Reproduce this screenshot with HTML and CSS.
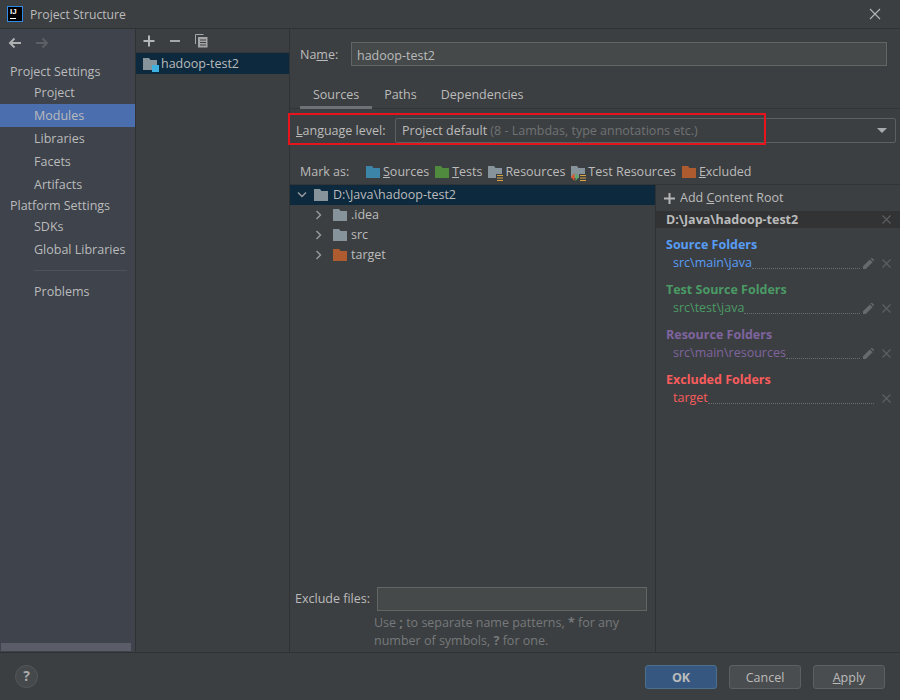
FILE: index.html
```html
<!DOCTYPE html>
<html lang="en">
<head>
    <meta charset="UTF-8">
    <title>Project Structure</title>
    <link rel="stylesheet" href="styles.css">
</head>
<body>
    <svg class="defs" width="0" height="0">
        <symbol id="folder" viewBox="0 0 14 12"><path d="M0 0h6l1.500 2H14v10H0z" fill="currentColor"/></symbol>
        <symbol id="lines" viewBox="0 0 6 6"><path d="M0 0h6v1H0zM0 2.500h6v1H0zM0 5h6v1H0z" fill="#d9a343"/></symbol>
        <symbol id="close" viewBox="0 0 9 9"><path d="M.5.500l8 8M8.500.500l-8 8" stroke="#5d6063" stroke-width="1.100" fill="none"/></symbol>
        <symbol id="pencil" viewBox="0 0 11 11"><path d="M0 11V8.200L6.800 1.400l2.800 2.800L2.800 11zM7.600.600L8.200 0q.5-.3 1 0l1.700 1.700q.3.500 0 1l-.6.600z" fill="#676a6c"/></symbol>
        <symbol id="chevron" viewBox="0 0 8 10"><path d="M1.500 1l4 4-4 4" stroke="#9a9da0" stroke-width="1.400" fill="none"/></symbol>
    </svg>

    <div class="window">
        <div class="titlebar">
            <div class="logo"><span class="logo-text">IJ</span><span class="logo-bar"></span></div>
            <span class="title">Project Structure</span>
            <svg class="title-close" width="12" height="12" viewBox="0 0 12 12"><path d="M1 1l10 10M11 1L1 11" stroke="#b4b6b8" stroke-width="1.100" fill="none"/></svg>
        </div>

        <div class="main">
            <div class="sidebar">
                <div class="nav-arrows">
                    <svg width="14" height="12" viewBox="0 0 14 12"><path d="M13 6H2M6.500 1.500L2 6l4.500 4.500" stroke="#aeb0b2" stroke-width="2" fill="none"/></svg>
                    <svg width="14" height="12" viewBox="0 0 14 12"><path d="M1 6h11M7.500 1.500L12 6l-4.500 4.500" stroke="#5c5f66" stroke-width="2" fill="none"/></svg>
                </div>
                <div class="nav-heading">Project Settings</div>
                <div class="nav-item tight">Project</div>
                <div class="nav-item active">Modules</div>
                <div class="nav-item">Libraries</div>
                <div class="nav-item">Facets</div>
                <div class="nav-item">Artifacts</div>
                <div class="nav-heading">Platform Settings</div>
                <div class="nav-item tight">SDKs</div>
                <div class="nav-item">Global Libraries</div>
                <div class="nav-separator"></div>
                <div class="nav-item">Problems</div>
                <div class="sidebar-scroll"></div>
            </div>

            <div class="modules">
                <div class="modules-toolbar">
                    <svg width="12" height="12" viewBox="0 0 12 12"><path d="M6 .500v11M.5 6h11" stroke="#b4b6b8" stroke-width="2" fill="none"/></svg>
                    <svg width="12" height="12" viewBox="0 0 12 12"><path d="M1 6h10" stroke="#a4a6a8" stroke-width="2" fill="none"/></svg>
                    <svg width="13" height="14" viewBox="0 0 13 14"><path d="M.5 10V.500h8" stroke="#a4a6a8" fill="none"/><path d="M3 3h9.500v10.500H3z" fill="#a4a6a8"/><path d="M5 6h6M5 8.500h6M5 11h6" stroke="#3c3f41" fill="none"/></svg>
                </div>
                <div class="module-row">
                    <span class="module-icon">
                        <svg class="folder-grey" width="14" height="12"><use href="#folder"/></svg>
                        <span class="module-badge"></span>
                    </span>
                    <span>hadoop-test2</span>
                </div>
            </div>

            <div class="content">
                <div class="name-row">
                    <label class="name-label">Na<u>m</u>e:</label>
                    <div class="field name-field">hadoop-test2</div>
                </div>
                <div class="tabs">
                    <div class="tab selected">Sources</div>
                    <div class="tab">Paths</div>
                    <div class="tab">Dependencies</div>
                </div>
                <div class="language-row">
                    <label class="language-label"><u>L</u>anguage level:</label>
                    <div class="combo">
                        <span>Project default <span class="muted">(8 - Lambdas, type annotations etc.)</span></span>
                        <span class="combo-arrow"></span>
                    </div>
                    <div class="highlight"></div>
                </div>
                <div class="mark-row">
                    <span class="mark-label">Mark as:</span>
                    <span class="mark"><svg class="folder-blue" width="14" height="12"><use href="#folder"/></svg><span><u>S</u>ources</span></span>
                    <span class="mark"><svg class="folder-green" width="14" height="12"><use href="#folder"/></svg><span><u>T</u>ests</span></span>
                    <span class="mark">
                        <span class="stack"><svg class="folder-grey" width="14" height="12"><use href="#folder"/></svg><svg class="stack-lines" width="8" height="8" viewBox="-1 -1 8 8"><use href="#lines" width="6" height="6"/></svg></span>
                        <span>Resources</span>
                    </span>
                    <span class="mark">
                        <span class="stack"><svg class="folder-grey" width="14" height="12"><use href="#folder"/></svg><svg class="stack-lines" width="8" height="8" viewBox="-1 -1 8 8"><use href="#lines" width="6" height="6"/></svg><svg class="stack-test" width="8" height="8" viewBox="0 0 8 8"><path d="M3.500 0v8L0 4z" fill="#d9572b"/><path d="M4.500 0v8L8 4z" fill="#59a869"/></svg></span>
                        <span>Test Resources</span>
                    </span>
                    <span class="mark"><svg class="folder-orange" width="14" height="12"><use href="#folder"/></svg><span><u>E</u>xcluded</span></span>
                </div>

                <div class="split">
                    <div class="tree-pane">
                        <div class="tree">
                            <div class="tree-row selected">
                                <svg class="chevron down" width="8" height="10"><use href="#chevron"/></svg>
                                <svg class="folder-grey" width="14" height="12"><use href="#folder"/></svg>
                                <span>D:\Java\hadoop-test2</span>
                            </div>
                            <div class="tree-row child">
                                <svg class="chevron" width="8" height="10"><use href="#chevron"/></svg>
                                <svg class="folder-grey" width="14" height="12"><use href="#folder"/></svg>
                                <span>.idea</span>
                            </div>
                            <div class="tree-row child">
                                <svg class="chevron" width="8" height="10"><use href="#chevron"/></svg>
                                <svg class="folder-grey" width="14" height="12"><use href="#folder"/></svg>
                                <span>src</span>
                            </div>
                            <div class="tree-row child">
                                <svg class="chevron" width="8" height="10"><use href="#chevron"/></svg>
                                <svg class="folder-orange" width="14" height="12"><use href="#folder"/></svg>
                                <span>target</span>
                            </div>
                        </div>
                        <div class="exclude">
                            <div class="exclude-row">
                                <label>Exclude files:</label>
                                <div class="field exclude-field"></div>
                            </div>
                            <div class="hint">Use <b>;</b> to separate name patterns, <b>*</b> for any<br>number of symbols, <b>?</b> for one.</div>
                        </div>
                    </div>

                    <div class="roots">
                        <div class="add-root">
                            <svg width="11" height="11" viewBox="0 0 11 11"><path d="M5.500 0v11M0 5.500h11" stroke="#b4b6b8" stroke-width="2" fill="none"/></svg>
                            <span>Add <u>C</u>ontent Root</span>
                        </div>
                        <div class="root-header">
                            <span>D:\Java\hadoop-test2</span>
                            <svg width="9" height="9"><use href="#close"/></svg>
                        </div>
                        <div class="group blue">
                            <div class="group-title">Source Folders</div>
                            <div class="group-row"><span>src\main\java</span><span class="leader"></span><svg class="edit" width="11" height="11"><use href="#pencil"/></svg><svg width="9" height="9"><use href="#close"/></svg></div>
                        </div>
                        <div class="group green">
                            <div class="group-title">Test Source Folders</div>
                            <div class="group-row"><span>src\test\java</span><span class="leader"></span><svg class="edit" width="11" height="11"><use href="#pencil"/></svg><svg width="9" height="9"><use href="#close"/></svg></div>
                        </div>
                        <div class="group purple">
                            <div class="group-title">Resource Folders</div>
                            <div class="group-row"><span>src\main\resources</span><span class="leader"></span><svg class="edit" width="11" height="11"><use href="#pencil"/></svg><svg width="9" height="9"><use href="#close"/></svg></div>
                        </div>
                        <div class="group red">
                            <div class="group-title">Excluded Folders</div>
                            <div class="group-row"><span>target</span><span class="leader"></span><svg class="remove" width="9" height="9"><use href="#close"/></svg></div>
                        </div>
                    </div>
                </div>
            </div>
        </div>

        <div class="footer">
            <div class="help">?</div>
            <div class="buttons">
                <div class="btn primary">OK</div>
                <div class="btn">Cancel</div>
                <div class="btn"><u>A</u>pply</div>
            </div>
        </div>
    </div>
</body>
</html>
```

FILE: styles.css
```css
* {
    box-sizing: border-box;
}

body {
    margin: 0;
    background-color: #3c3f41;
    color: #bbbbbb;
    font-family: "Open Sans", "Noto Sans", sans-serif;
    font-size: 12.5px;
    line-height: 20px;
}

.defs {
    position: absolute;
}

.window {
    display: flex;
    flex-direction: column;
    width: 900px;
    height: 700px;
}

svg {
    flex: none;
    display: block;
}

/* folder colours */
.folder-grey { color: #87939a; }
.folder-blue { color: #3d85a8; }
.folder-green { color: #4f8a3e; }
.folder-orange { color: #ae5b2f; }

/* title bar */
.titlebar {
    display: flex;
    align-items: center;
    height: 29px;
    padding: 0 19px 0 7px;
    border-bottom: 1px solid #2f3133;
}

.logo {
    position: relative;
    width: 16px;
    height: 16px;
    margin-right: 7px;
    background-color: #000;
    border: 1px solid #2f8ae8;
}

.logo-text {
    position: absolute;
    left: 2px;
    top: 1px;
    color: #fff;
    font-family: "Liberation Sans", sans-serif;
    font-size: 8px;
    font-weight: bold;
    line-height: 8px;
}

.logo-bar {
    position: absolute;
    left: 2px;
    bottom: 2px;
    width: 6px;
    height: 1px;
    background-color: #fff;
}

.title {
    flex: 1;
    padding-top: 2px;
    font-size: 12.2px;
}

/* left navigation */
.main {
    display: flex;
    height: 624px;
    border-bottom: 1px solid #2f3133;
}

.sidebar {
    position: relative;
    width: 136px;
    background-color: #3e434c;
    border-right: 1px solid #2f3133;
}

.nav-arrows {
    display: flex;
    gap: 13px;
    height: 33px;
    padding: 8px 0 0 8px;
}

.nav-heading {
    height: 21px;
    padding-left: 10px;
}

.nav-item {
    height: 23px;
    padding: 2px 0 0 34px;
}

.nav-item.tight {
    height: 21px;
    padding-top: 0;
}

.nav-item.active {
    background-color: #4b6eaf;
}

.nav-separator {
    height: 1px;
    margin: 9px 8px 9px 34px;
    background-color: #4e525b;
}

.sidebar-scroll {
    position: absolute;
    left: 1px;
    right: 4px;
    bottom: 1px;
    height: 8px;
    background-color: #5a5d68;
}

/* module list */
.modules {
    width: 154px;
    border-right: 1px solid #2f3133;
}

.modules-toolbar {
    display: flex;
    align-items: center;
    gap: 14px;
    height: 24px;
    padding-left: 7px;
    border-bottom: 1px solid #323436;
}

.module-row {
    display: flex;
    align-items: center;
    gap: 4px;
    height: 21px;
    padding-left: 7px;
    background-color: #0d293e;
}

.module-icon {
    position: relative;
    width: 14px;
    height: 12px;
}

.module-badge {
    position: absolute;
    right: -2px;
    bottom: -2px;
    width: 7px;
    height: 7px;
    background-color: #3fb1e0;
}

/* module editor */
.content {
    flex: 1;
    display: flex;
    flex-direction: column;
    min-width: 0;
}

.field {
    height: 24px;
    padding: 3px 5px 0;
    background-color: #45494a;
    border: 1px solid #646464;
}

.name-row {
    display: flex;
    align-items: center;
    height: 24px;
    margin-top: 13px;
    padding: 0 13px 0 10px;
}

.name-label {
    width: 51px;
    padding-top: 2px;
}

.name-field {
    flex: 1;
}

.tabs {
    display: flex;
    height: 33px;
    margin-top: 10px;
    padding-left: 10px;
    border-bottom: 1px solid #323436;
}

.tab {
    padding: 9px 12px 0;
}

.tab.selected {
    padding: 9px 13px 0;
    border-bottom: 3px solid #6e7277;
    height: 33px;
}

.language-row {
    position: relative;
    display: flex;
    align-items: center;
    height: 43px;
    padding: 0 4px 0 6px;
}

.language-label {
    width: 99px;
}

.combo {
    flex: 1;
    display: flex;
    align-items: center;
    justify-content: space-between;
    height: 25px;
    padding: 0 8px 0 6px;
    background-color: #3c3f41;
    border: 1px solid #5e6060;
    border-radius: 2px;
}

.muted {
    color: #6f7274;
}

.combo-arrow {
    width: 0;
    height: 0;
    border-left: 5px solid transparent;
    border-right: 5px solid transparent;
    border-top: 5px solid #a8aaac;
}

.highlight {
    position: absolute;
    left: -2px;
    top: 4px;
    width: 478px;
    height: 32px;
    border: 2px solid #e8141d;
}

.mark-row {
    display: flex;
    align-items: center;
    height: 25px;
    margin-top: 8px;
    padding: 0 0 1px 10px;
    border-bottom: 1px solid #323436;
}

.mark-label {
    width: 66px;
}

.mark {
    display: flex;
    align-items: center;
    gap: 3px;
    margin-right: 6px;
}

.stack {
    position: relative;
    width: 14px;
    height: 12px;
}

.stack-lines {
    position: absolute;
    right: -2px;
    bottom: -4px;
    background-color: #3c3f41;
}

.stack-test {
    position: absolute;
    left: 0;
    bottom: -3px;
}

.split {
    flex: 1;
    display: flex;
    min-height: 0;
}

/* content tree */
.tree-pane {
    width: 366px;
    display: flex;
    flex-direction: column;
    justify-content: space-between;
    border-right: 1px solid #2f3133;
}

.tree-row {
    display: flex;
    align-items: center;
    gap: 4px;
    height: 20px;
    padding-left: 8px;
}

.tree-row.selected {
    gap: 5px;
    background-color: #0d293e;
}

.tree-row.child {
    padding-left: 25px;
}

.chevron {
    margin-right: 6px;
}

.chevron.down {
    margin-right: 3px;
    transform: rotate(90deg);
}

.exclude {
    padding-bottom: 2px;
}

.exclude-row {
    display: flex;
    align-items: center;
    padding: 0 8px 0 5px;
}

.exclude-row label {
    width: 82px;
}

.exclude-field {
    flex: 1;
}

.hint {
    margin-top: 3px;
    padding-left: 84px;
    color: #76797b;
    line-height: 18px;
}

/* content roots */
.roots {
    flex: 1;
    min-width: 0;
}

.add-root {
    display: flex;
    align-items: center;
    gap: 5px;
    height: 26px;
    padding-left: 8px;
}

.root-header {
    display: flex;
    align-items: center;
    justify-content: space-between;
    height: 17px;
    padding: 0 9px 0 10px;
    background-color: #313335;
    font-weight: bold;
}

.group {
    height: 45px;
    padding: 7px 9px 0 10px;
}

.group-title {
    font-weight: bold;
    height: 18px;
}

.group-row {
    display: flex;
    align-items: center;
    height: 20px;
    padding-left: 7px;
}

.leader {
    flex: 1;
    align-self: flex-end;
    margin-bottom: 4px;
    border-bottom: 1px dotted #6b6e70;
}

.edit {
    margin: 0 8px 0 3px;
}

.remove {
    margin-left: 8px;
}

.blue { color: #589df6; }
.green { color: #4a9a66; }
.purple { color: #7f649f; }
.red { color: #f85c5c; }

/* footer */
.footer {
    flex: 1;
    display: flex;
    align-items: center;
    justify-content: space-between;
    padding: 0 15px;
}

.help {
    width: 23px;
    height: 23px;
    border: 1px solid #55585a;
    border-radius: 50%;
    background-color: #46494b;
    color: #a9abad;
    text-align: center;
    font-weight: bold;
    font-size: 14px;
    line-height: 20px;
}

.buttons {
    display: flex;
    gap: 12px;
}

.btn {
    width: 72px;
    height: 24px;
    text-align: center;
    line-height: 24px;
    background-color: #4a4d4f;
    border: 1px solid #5e6060;
    border-radius: 3px;
}

.btn.primary {
    background-color: #365880;
    border-color: #4c708c;
    font-weight: bold;
}
```
